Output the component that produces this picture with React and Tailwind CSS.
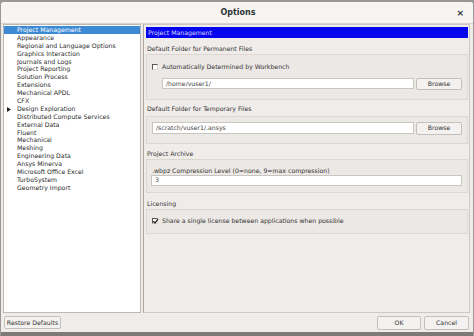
import React from 'react';

const items = [
  'Project Management',
  'Appearance',
  'Regional and Language Options',
  'Graphics Interaction',
  'Journals and Logs',
  'Project Reporting',
  'Solution Process',
  'Extensions',
  'Mechanical APDL',
  'CFX',
  'Design Exploration',
  'Distributed Compute Services',
  'External Data',
  'Fluent',
  'Mechanical',
  'Meshing',
  'Engineering Data',
  'Ansys Minerva',
  'Microsoft Office Excel',
  'TurboSystem',
  'Geometry Import',
];

function CheckBox({ checked }) {
  return (
    <div className="w-[6px] h-[6px] bg-white border-t border-l border-[#555] border-r border-b border-r-[#ddd] border-b-[#ddd] relative shrink-0">
      {checked && (
        <svg className="absolute -left-[1px] -top-[1px]" width="7" height="7" viewBox="0 0 7 7">
          <path d="M1.3 3.2 L3 5 L6 1.2" stroke="#222" strokeWidth="1.3" fill="none" />
        </svg>
      )}
    </div>
  );
}

function Input({ value, className = '' }) {
  return (
    <div className={`bg-white border border-[#c9c5c1] flex items-center pl-[3px] text-[#444] ${className}`}>
      {value}
    </div>
  );
}

function Btn({ children, className = '' }) {
  return (
    <div className={`bg-[#f4f2f0] border border-[#c4c0bc] rounded-[2px] flex items-center justify-center text-[#333] ${className}`}>
      {children}
    </div>
  );
}

function Label({ children, className = '' }) {
  return <div className={`h-[10px] leading-[10px] pl-[1px] text-[#333] ${className}`}>{children}</div>;
}

export default function App() {
  return (
    <div
      className="w-[474px] h-[336px] bg-[#9a9897] flex flex-col pt-[2px] px-[1px] overflow-hidden text-[6.2px]"
      style={{ fontFamily: '"DejaVu Sans", sans-serif' }}
    >
      <div className="flex-1 flex flex-col bg-[#efecea] rounded-t-[3px] overflow-hidden">
        {/* title bar */}
        <div className="h-[22px] shrink-0 bg-[#f6f5f4] border-b border-[#d6d2ce] flex items-center justify-center relative">
          <span className="text-[8px] text-[#2e3436] font-semibold pl-[2px]">Options</span>
          <span className="absolute right-[9px] top-[5px] text-[9px] font-bold text-[#333]">×</span>
        </div>

        {/* body */}
        <div className="h-[289px] shrink-0 flex pl-[2px] pr-[3px]">
          {/* tree list */}
          <div className="w-[138px] bg-white border border-[#bdb9b5] pt-[1px]">
            {items.map((it, i) => (
              <div
                key={it}
                className={`h-[7.9px] leading-[7.9px] pl-[13px] relative whitespace-nowrap ${
                  i === 0 ? 'bg-[#3d8ad4] text-white' : 'text-[#2a2a2a]'
                }`}
              >
                {i === 10 && (
                  <svg className="absolute left-[3px] top-[2px]" width="4" height="5" viewBox="0 0 4 5">
                    <polygon points="0,0 4,2.5 0,5" fill="#222" />
                  </svg>
                )}
                {it}
              </div>
            ))}
          </div>

          {/* settings panel */}
          <div className="ml-[2px] flex-1 border border-[#cdc9c5] border-l-[#a9a5a1] pt-[2px] pl-[2px] pr-[1px] flex flex-col">
            <div className="h-[11px] bg-[#0606ee] text-[#d8d8ff] flex items-center pl-[2px]">Project Management</div>

            <Label className="mt-[6px]">Default Folder for Permanent Files</Label>
            <div className="border border-[#dbd7d3] bg-[#ece8e5] pt-[7px] pb-[9px] pl-[5px] pr-[5px]">
              <div className="h-[10px] flex items-center gap-[4px]">
                <CheckBox />
                <span className="text-[#333]">Automatically Determined by Workbench</span>
              </div>
              <div className="mt-[6px] flex gap-[2px] pl-[10px]">
                <Input value="/home/vuser1/" className="flex-1 h-[11px]" />
                <Btn className="w-[46px] h-[12px] -mt-[0.5px]">Browse</Btn>
              </div>
            </div>

            <Label className="mt-[4px]">Default Folder for Temporary Files</Label>
            <div className="mt-[2px] border border-[#dbd7d3] bg-[#ece8e5] pt-[5px] pb-[8px] pl-[5px] pr-[5px]">
              <div className="flex gap-[2px]">
                <Input value="/scratch/vuser1/.ansys" className="flex-1 h-[12px]" />
                <Btn className="w-[46px] h-[13px]">Browse</Btn>
              </div>
            </div>

            <Label className="mt-[5px]">Project Archive</Label>
            <div className="border border-[#dbd7d3] bg-[#ece8e5] pt-[7px] pb-[6px] pl-[4px] pr-[5px]">
              <div className="h-[8px] leading-[8px] pl-[1px] text-[#333]">.wbpz Compression Level (0=none, 9=max compression)</div>
              <Input value="3" className="h-[11px]" />
            </div>

            <Label className="mt-[6px]">Licensing</Label>
            <div className="border border-[#dbd7d3] bg-[#ece8e5] pt-[6px] pb-[7px] pl-[5px] pr-[5px]">
              <div className="h-[10px] flex items-center gap-[4px]">
                <CheckBox checked />
                <span className="text-[#333]">Share a single license between applications when possible</span>
              </div>
            </div>
          </div>
        </div>

        {/* bottom buttons */}
        <div className="flex-1 flex items-center justify-between pl-[3px] pr-[4px]">
          <Btn className="w-[57px] h-[13px] border-[#8fa8c4] bg-[#eef0f3] text-[#222]">Restore Defaults</Btn>
          <div className="flex gap-[3px]">
            <Btn className="w-[44px] h-[14px]">OK</Btn>
            <Btn className="w-[45px] h-[14px]">Cancel</Btn>
          </div>
        </div>
      </div>
      <div className="h-[4px] shrink-0 bg-[#7d7b7a]" />
    </div>
  );
}
